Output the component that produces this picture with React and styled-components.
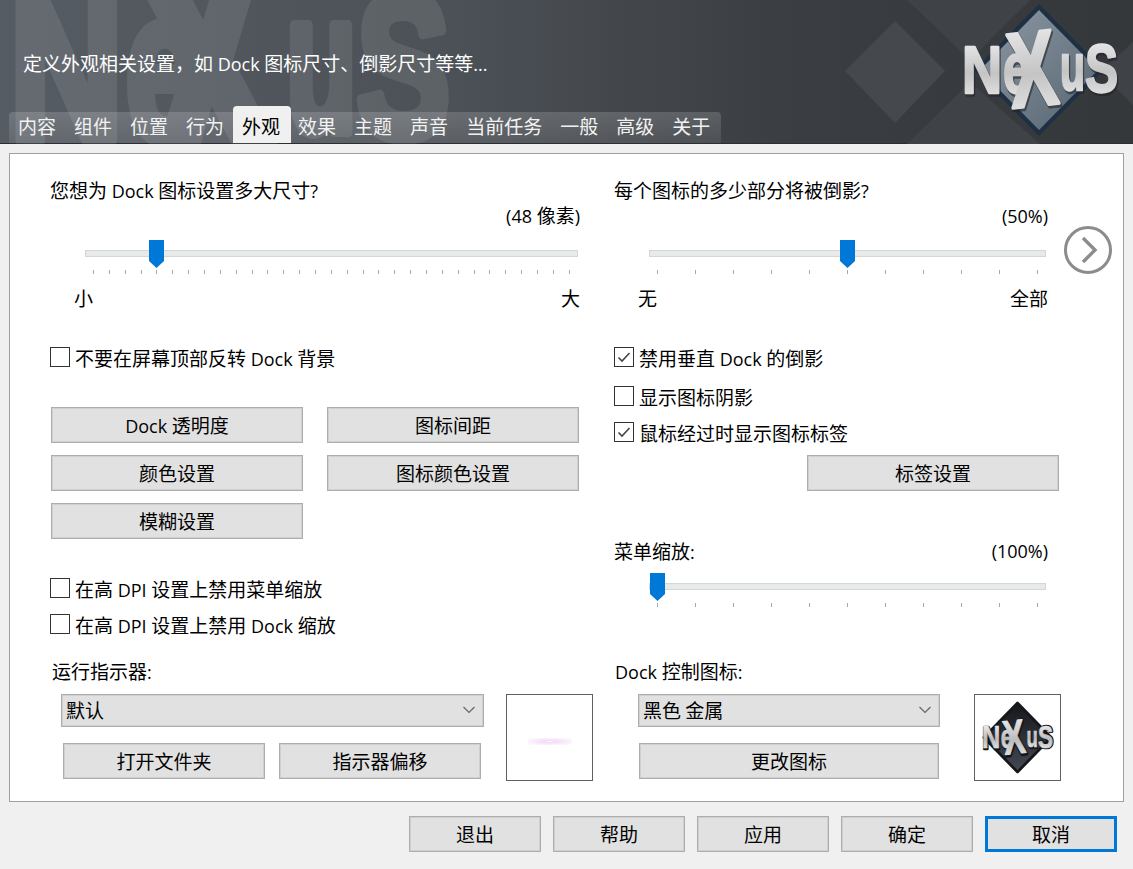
import React from 'react';
import styled, { createGlobalStyle } from 'styled-components';

const FONT = `"Noto Sans CJK SC", "Noto Sans", sans-serif`;

const GlobalStyle = createGlobalStyle`
	html, body {
		margin: 0;
		padding: 0;
		background: #f0f0f0;
	}
	body {
		font-family: ${FONT};
		font-size: 19px;
		color: #000;
		overflow: hidden;
	}
	* {
		box-sizing: border-box;
	}
`;

const Page = styled.div`
	width: 1133px;
	height: 869px;
	display: flex;
	flex-direction: column;
	background: #f0f0f0;
`;

// latin runs sit a size below the chinese text in the original dialog
const En = styled.span`
	font-family: "Open Sans", "Noto Sans", sans-serif;
	font-size: 18px;
`;

const Header = styled.div`
	position: relative;
	height: 144px;
	display: flex;
	flex-direction: column;
	background: linear-gradient(90deg, #565c63 0%, #4c5157 40%, #3a3d41 70%, #35383b 100%);
	border-bottom: 1px solid #2c2e31;
`;

const Backdrop = styled.svg`
	position: absolute;
	inset: 0;
	width: 1133px;
	height: 144px;
`;

const Intro = styled.div`
	position: relative;
	margin: 50px 0 0 23px;
	height: 26px;
	line-height: 26px;
	color: #fff;
`;

const TabBar = styled.div`
	position: relative;
	margin: auto 0 0 9px;
	width: 712px;
	height: 31px;
	display: flex;
	background: linear-gradient(180deg, rgba(255, 255, 255, 0.16), rgba(255, 255, 255, 0.08));
	border-radius: 4px 4px 0 0;
`;

const Tab = styled.div`
	height: ${(p) => (p.$active ? '37px' : '31px')};
	margin-top: ${(p) => (p.$active ? '-6px' : '0')};
	margin-right: ${(p) => (p.$active ? '-2px' : '0')};
	padding: ${(p) => (p.$active ? '6px 11px 0 9px' : '0 9px')};
	line-height: 28px;
	white-space: nowrap;
	color: ${(p) => (p.$active ? '#000' : '#f2f2f2')};
	background: ${(p) => (p.$active ? '#f0f0f0' : 'transparent')};
	border-radius: 4px 4px 0 0;
	position: relative;
	z-index: ${(p) => (p.$active ? 1 : 0)};
`;

const Panel = styled.div`
	margin: 9px 0 0 9px;
	width: 1115px;
	height: 649px;
	background: #fff;
	border: 1px solid #a0a0a0;
	padding: 23px 0 0 40px;
	display: grid;
	grid-template-columns: 530px 434px;
	column-gap: 34px;
`;

const Column = styled.div`
	display: flex;
	flex-direction: column;
`;

const Line = styled.div`
	height: 26px;
	line-height: 26px;
	white-space: nowrap;
	padding-left: ${(p) => p.$indent || 0}px;
	margin-top: ${(p) => p.$top || 0}px;
`;

const SpreadLine = styled(Line)`
	display: flex;
	justify-content: space-between;
`;

const ValueLine = styled(Line)`
	text-align: right;
	margin-top: -1px;
`;

const SliderRow = styled.div`
	display: flex;
	align-items: flex-start;
	margin-top: ${(p) => p.$top}px;
	height: 35px;
`;

const Slider = styled.div`
	position: relative;
	flex: none;
	margin-left: 35px;
	width: ${(p) => p.$width}px;
	height: 35px;
`;

const Track = styled.div`
	position: absolute;
	top: 10px;
	left: 0;
	right: 0;
	height: 7px;
	background: #e7eaea;
	border: 1px solid #d6d6d6;
`;

const Thumb = styled.svg`
	position: absolute;
	top: 0;
	left: ${(p) => p.$left}px;
	width: 15px;
	height: 28px;
`;

const Ticks = styled.div`
	position: absolute;
	top: 30px;
	left: 8px;
	right: 8px;
	display: flex;
	justify-content: space-between;
`;

const Tick = styled.span`
	width: 1px;
	height: 4px;
	background: #a8a8a8;
`;

const NextButton = styled.svg`
	flex: none;
	width: 48px;
	height: 48px;
	margin: -14px 0 0 18px;
`;

const RangeLabels = styled(SpreadLine)`
	padding-left: 24px;
	margin-top: 10px;
`;

const Check = styled.label`
	display: flex;
	align-items: center;
	gap: 5px;
	height: 26px;
	white-space: pre;
	margin-top: ${(p) => p.$top || 0}px;
`;

const Box = styled.span`
	flex: none;
	width: 20px;
	height: 20px;
	border: 1px solid #333;
	background: #fff;
	display: flex;
	align-items: center;
	justify-content: center;
`;

const CheckText = styled.span`
	display: block;
`;

const ButtonGrid = styled.div`
	display: grid;
	grid-template-columns: 252px 252px;
	grid-auto-rows: 36px;
	gap: 12px 24px;
	margin: 37px 0 0 1px;
`;

const Button = styled.button`
	width: ${(p) => (p.$width ? `${p.$width}px` : 'auto')};
	height: 36px;
	padding: 0 0 2px;
	margin-left: ${(p) => p.$left || 0}px;
	margin-top: ${(p) => p.$top || 0}px;
	background: #e1e1e1;
	border: ${(p) => (p.$focus ? '3px solid #0078d7' : '1px solid #adadad')};
	box-shadow: ${(p) => (p.$focus ? 'none' : 'inset 0 0 0 1px #d0d0d0')};
	font-family: ${FONT};
	font-size: 19px;
	color: #000;
	white-space: nowrap;
`;

const PickerRow = styled.div`
	display: flex;
	align-items: flex-start;
	margin-top: 10px;
	margin-left: ${(p) => p.$left}px;
`;

const PickerControls = styled.div`
	flex: none;
	display: flex;
	flex-direction: column;
	width: ${(p) => p.$width}px;
`;

const Select = styled.div`
	height: 33px;
	display: flex;
	align-items: center;
	justify-content: space-between;
	padding: 0 8px 2px 4px;
	background: #e1e1e1;
	border: 1px solid #adadad;
	box-shadow: inset 0 0 0 1px #d0d0d0;
`;

const ButtonRow = styled.div`
	display: flex;
	gap: 14px;
	margin: 16px 0 0 ${(p) => p.$left}px;
`;

const Preview = styled.div`
	flex: none;
	width: 87px;
	height: 87px;
	margin-left: ${(p) => p.$left}px;
	border: 1px solid #606060;
	background: #fff;
	display: flex;
	align-items: center;
	justify-content: center;
`;

const IndicatorGlow = styled.div`
	width: 44px;
	height: 7px;
	margin-top: 7px;
	background: radial-gradient(ellipse at center, #fff 0, #fff 6%, #f3d8f8 10%, #f8eafb 50%, #fff 100%);
`;

const Footer = styled.div`
	display: flex;
	justify-content: flex-end;
	gap: 12px;
	margin-top: 14px;
	padding-right: 16px;
`;

const LogoText = styled.text`
	font-family: "Liberation Sans", sans-serif;
	font-weight: 700;
`;

const letters = [
	{ c: 'N', x: 962, y: 93, sx: 0.83, sy: 1.0, size: 67, r: 0 },
	{ c: 'e', x: 1003, y: 93, sx: 0.68, sy: 1.0, size: 72, r: 0 },
	{ c: 'u', x: 1060, y: 90, sx: 0.62, sy: 1.0, size: 66, r: 0 },
	{ c: 'S', x: 1085, y: 92, sx: 0.73, sy: 1.0, size: 68, r: 0 },
	{ c: 'X', x: 1012, y: 108, sx: 0.98, sy: 1.44, size: 74, r: -6 },
];

// the heavy logo face has no installed match, so the bold text gets thickened with a stroke
function NexusLetters({ fill, weight = 2.4 }) {
	return letters.map((l) => (
		<LogoText
			key={l.c}
			fontSize={l.size}
			fill={fill}
			stroke={fill}
			strokeWidth={weight}
			strokeLinejoin='round'
			transform={`translate(${l.x} ${l.y}) rotate(${l.r}) scale(${l.sx} ${l.sy})`}
		>
			{l.c}
		</LogoText>
	));
}

function HeaderArt() {
	return (
		<Backdrop viewBox='0 0 1133 144'>
			<defs>
				<linearGradient id='chrome' x1='0' y1='0' x2='0' y2='1'>
					<stop offset='0' stopColor='#f4f4f4' />
					<stop offset='0.55' stopColor='#c4c4c4' />
					<stop offset='1' stopColor='#eeeeee' />
				</linearGradient>
				<linearGradient id='plate' x1='0' y1='0' x2='1' y2='1'>
					<stop offset='0' stopColor='#8d9aa6' />
					<stop offset='1' stopColor='#56646f' />
				</linearGradient>
			</defs>
			<g transform='translate(-2703 -139) scale(2.82 3)' opacity='0.09'>
				<NexusLetters fill='#fff' weight={4} />
			</g>
			<polygon points='907,0 1030,0 970,60' fill='#3f4246' />
			<polygon points='907,144 970,82 1040,144' fill='#3f4246' />
			<polygon points='1133,42 1100,72 1133,105' fill='#3f4246' />
			<polygon points='895,21 945,71 895,123 845,71' fill='#45484d' />
			<polygon points='1039,4 1104,70 1039,136 974,70' fill='#1f3045' />
			<polygon points='1039,10 1098,70 1039,130 980,70' fill='url(#plate)' />
			<g transform='translate(1 2)' opacity='0.6'>
				<NexusLetters fill='#22242a' weight={3.4} />
			</g>
			<NexusLetters fill='url(#chrome)' />
		</Backdrop>
	);
}

function SmallLogo() {
	return (
		<svg width='85' height='85' viewBox='946.5 -23.5 187 187'>
			<defs>
				<linearGradient id='dark' x1='0' y1='0' x2='0' y2='1'>
					<stop offset='0' stopColor='#15171b' />
					<stop offset='1' stopColor='#454952' />
				</linearGradient>
				<linearGradient id='chromeSmall' x1='0' y1='0' x2='0' y2='1'>
					<stop offset='0' stopColor='#fafafa' />
					<stop offset='0.55' stopColor='#bcbcbc' />
					<stop offset='1' stopColor='#f4f4f4' />
				</linearGradient>
			</defs>
			<polygon
				points='1040,-6 1114,70 1040,146 966,70'
				fill='url(#dark)'
				stroke='#15171b'
				strokeWidth='6'
				strokeLinejoin='round'
			/>
			<g transform='translate(1 2)'>
				<NexusLetters fill='#111318' weight={6} />
			</g>
			<NexusLetters fill='url(#chromeSmall)' weight={1.6} />
		</svg>
	);
}

function DockSlider({ width, left, ticks }) {
	return (
		<Slider $width={width}>
			<Track />
			<Ticks>
				{Array.from({ length: ticks }, (_, i) => (
					<Tick key={i} />
				))}
			</Ticks>
			<Thumb $left={left} viewBox='0 0 15 28'>
				<polygon points='0,0 15,0 15,21 7.5,28 0,21' fill='#0078d7' />
			</Thumb>
		</Slider>
	);
}

function CheckItem({ checked, top, children }) {
	return (
		<Check $top={top}>
			<Box>
				{checked && (
					<svg width='16' height='16' viewBox='0 0 16 16'>
						<path d='M2.5 8.5 L6 12 L13.5 4' fill='none' stroke='#444' strokeWidth='1.6' />
					</svg>
				)}
			</Box>
			<CheckText>{children}</CheckText>
		</Check>
	);
}

function SelectBox({ children }) {
	return (
		<Select>
			<span>{children}</span>
			<svg width='12' height='8' viewBox='0 0 12 8'>
				<path d='M0.5 1 L6 6.5 L11.5 1' fill='none' stroke='#666' strokeWidth='1.2' />
			</svg>
		</Select>
	);
}

const tabs = ['内容', '组件', '位置', '行为', '外观', '效果', '主题', '声音', '当前任务', '一般', '高级', '关于'];
const footerButtons = ['退出', '帮助', '应用', '确定'];

export default function App() {
	return (
		<Page>
			<GlobalStyle />
			<Header>
				<HeaderArt />
				<Intro>
					定义外观相关设置，如<En> Dock </En>图标尺寸、倒影尺寸等等<En>...</En>
				</Intro>
				<TabBar>
					{tabs.map((t) => (
						<Tab key={t} $active={t === '外观'}>
							{t}
						</Tab>
					))}
				</TabBar>
			</Header>
			<Panel>
				<Column>
					<Line>
						您想为<En> Dock </En>图标设置多大尺寸<En>?</En>
					</Line>
					<ValueLine>
						<En>(48 </En>像素<En>)</En>
					</ValueLine>
					<SliderRow $top={12}>
						<DockSlider width={493} left={64} ticks={31} />
					</SliderRow>
					<RangeLabels>
						<span>小</span>
						<span>大</span>
					</RangeLabels>
					<CheckItem top={33}>
						不要在屏幕顶部反转<En> Dock </En>背景
					</CheckItem>
					<ButtonGrid>
						<Button>
							<En>Dock </En>透明度
						</Button>
						<Button>图标间距</Button>
						<Button>颜色设置</Button>
						<Button>图标颜色设置</Button>
						<Button>模糊设置</Button>
					</ButtonGrid>
					<CheckItem top={36}>
						在高<En> DPI </En>设置上禁用菜单缩放
					</CheckItem>
					<CheckItem top={10}>
						在高<En> DPI </En>设置上禁用<En> Dock </En>缩放
					</CheckItem>
					<Line $top={21} $indent={2}>
						运行指示器<En>:</En>
					</Line>
					<PickerRow $left={11}>
						<PickerControls $width={423}>
							<SelectBox>默认</SelectBox>
							<ButtonRow $left={2}>
								<Button $width={202}>打开文件夹</Button>
								<Button $width={202}>指示器偏移</Button>
							</ButtonRow>
						</PickerControls>
						<Preview $left={22}>
							<IndicatorGlow />
						</Preview>
					</PickerRow>
				</Column>
				<Column>
					<Line>
						每个图标的多少部分将被倒影<En>?</En>
					</Line>
					<ValueLine>
						<En>(50%)</En>
					</ValueLine>
					<SliderRow $top={12}>
						<DockSlider width={397} left={191} ticks={11} />
						<NextButton viewBox='0 0 48 48'>
							<circle cx='24' cy='24' r='22.5' fill='none' stroke='#8c8c8c' strokeWidth='3' />
							<path d='M19 12 L31 24 L19 36' fill='none' stroke='#8c8c8c' strokeWidth='3.4' />
						</NextButton>
					</SliderRow>
					<RangeLabels>
						<span>无</span>
						<span>全部</span>
					</RangeLabels>
					<CheckItem top={33} checked>
						禁用垂直<En> Dock </En>的倒影
					</CheckItem>
					<CheckItem top={13}>显示图标阴影</CheckItem>
					<CheckItem top={10} checked>
						鼠标经过时显示图标标签
					</CheckItem>
					<Button $width={252} $left={193} $top={10}>
						标签设置
					</Button>
					<SpreadLine $top={47}>
						<span>
							菜单缩放<En>:</En>
						</span>
						<En>(100%)</En>
					</SpreadLine>
					<SliderRow $top={9}>
						<DockSlider width={397} left={1} ticks={11} />
					</SliderRow>
					<Line $top={50} $indent={1}>
						<En>Dock </En>控制图标<En>:</En>
					</Line>
					<PickerRow $left={24}>
						<PickerControls $width={302}>
							<SelectBox>黑色 金属</SelectBox>
							<ButtonRow $left={1}>
								<Button $width={300}>更改图标</Button>
							</ButtonRow>
						</PickerControls>
						<Preview $left={34}>
							<SmallLogo />
						</Preview>
					</PickerRow>
				</Column>
			</Panel>
			<Footer>
				{footerButtons.map((b) => (
					<Button key={b} $width={132}>
						{b}
					</Button>
				))}
				<Button $width={132} $focus>
					取消
				</Button>
			</Footer>
		</Page>
	);
}
